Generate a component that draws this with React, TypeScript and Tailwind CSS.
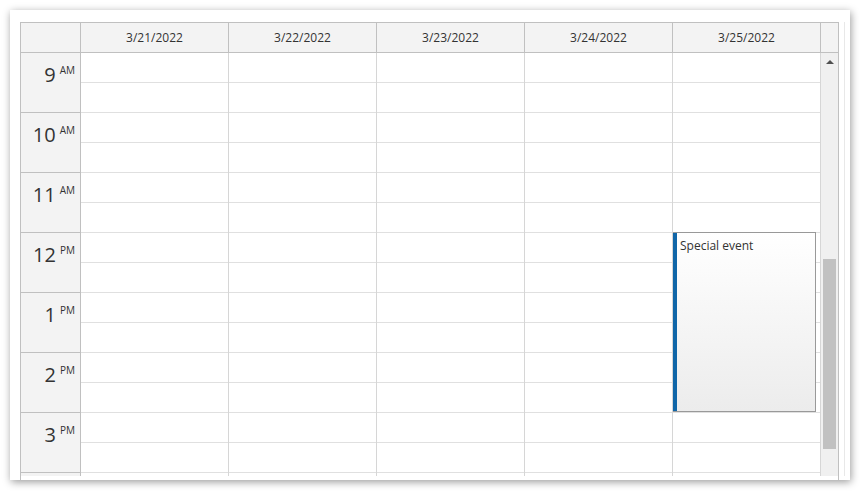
const days = ["3/21/2022", "3/22/2022", "3/23/2022", "3/24/2022", "3/25/2022"];

type Hour = { label: string; suffix: string };

const hours: Hour[] = [
  { label: "9", suffix: "AM" },
  { label: "10", suffix: "AM" },
  { label: "11", suffix: "AM" },
  { label: "12", suffix: "PM" },
  { label: "1", suffix: "PM" },
  { label: "2", suffix: "PM" },
  { label: "3", suffix: "PM" },
  // 4 PM row is scrolled out of view, only its top line shows
  { label: "", suffix: "" },
];

function RowHeader() {
  return (
    <div className="w-[60px] shrink-0 border-r border-[#c0c0c0] bg-[#f3f3f3]">
      {hours.map((h, i) => (
        <div key={i} className="h-[60px] border-b border-[#c0c0c0] flex justify-end pr-[5px] pt-[10px]">
          {h.label && (
            <>
              <span className="text-[20px] leading-[24px] text-[#333]">{h.label}</span>
              <span className="text-[10px] leading-[12px] text-[#333] ml-[4px] mt-[1px]">{h.suffix}</span>
            </>
          )}
        </div>
      ))}
    </div>
  );
}

function DayColumn({ withEvent }: { withEvent?: boolean }) {
  return (
    <div className="relative w-[148px] shrink-0 border-r border-[#d6d6d6]">
      {hours.map((_, i) => (
        <div key={i}>
          <div className="h-[30px] border-b border-[#e0e0e0]" />
          <div className="h-[30px] border-b border-[#e0e0e0]" />
        </div>
      ))}
      {withEvent && (
        <div className="absolute left-0 top-[179px] w-[143px] h-[180px] flex border border-l-0 border-[#999] bg-gradient-to-b from-white to-[#ececec]">
          <div className="w-[4px] bg-[#1066a8] shrink-0" />
          <div className="pl-[3px] pt-[5px] text-[12px] leading-[16px] text-[#333]">Special event</div>
        </div>
      )}
    </div>
  );
}

function Scrollbar() {
  return (
    <div className="w-[17px] shrink-0 bg-[#f0f0f0] flex flex-col items-center">
      <div className="mt-[7px] ml-[1px] w-0 h-0 border-l-[4px] border-r-[4px] border-b-[4px] border-l-transparent border-r-transparent border-b-[#505050]" />
      <div className="mt-[195px] w-[13px] h-[190px] bg-[#c1c1c1]" />
    </div>
  );
}

export default function App() {
  return (
    <div className="w-[860px] h-[491px] bg-white p-[10px]" style={{ fontFamily: '"Open Sans", "Noto Sans", sans-serif' }}>
      <div className="w-[840px] h-[470px] bg-white shadow-[1px_2px_8px_rgba(0,0,0,0.4)] pl-[10px] pt-[12px] flex">
        <div className="w-[819px] border border-b-0 border-[#c0c0c0] flex flex-col">
          <div className="flex h-[30px] border-b border-[#c0c0c0] bg-[#f3f3f3]">
            <div className="w-[60px] shrink-0 border-r border-[#c0c0c0]" />
            {days.map((d) => (
              <div
                key={d}
                className="w-[148px] shrink-0 border-r border-[#c0c0c0] flex items-center justify-center text-[12px] text-[#333]"
              >
                {d}
              </div>
            ))}
            <div className="w-[17px] shrink-0" />
          </div>
          <div className="flex h-[423px] overflow-hidden">
            <RowHeader />
            {days.map((d, i) => (
              <DayColumn key={d} withEvent={i === 4} />
            ))}
            <Scrollbar />
          </div>
        </div>
        <div className="ml-[5px] mb-[4px] w-px bg-[#e8e8e8]" />
      </div>
    </div>
  );
}
